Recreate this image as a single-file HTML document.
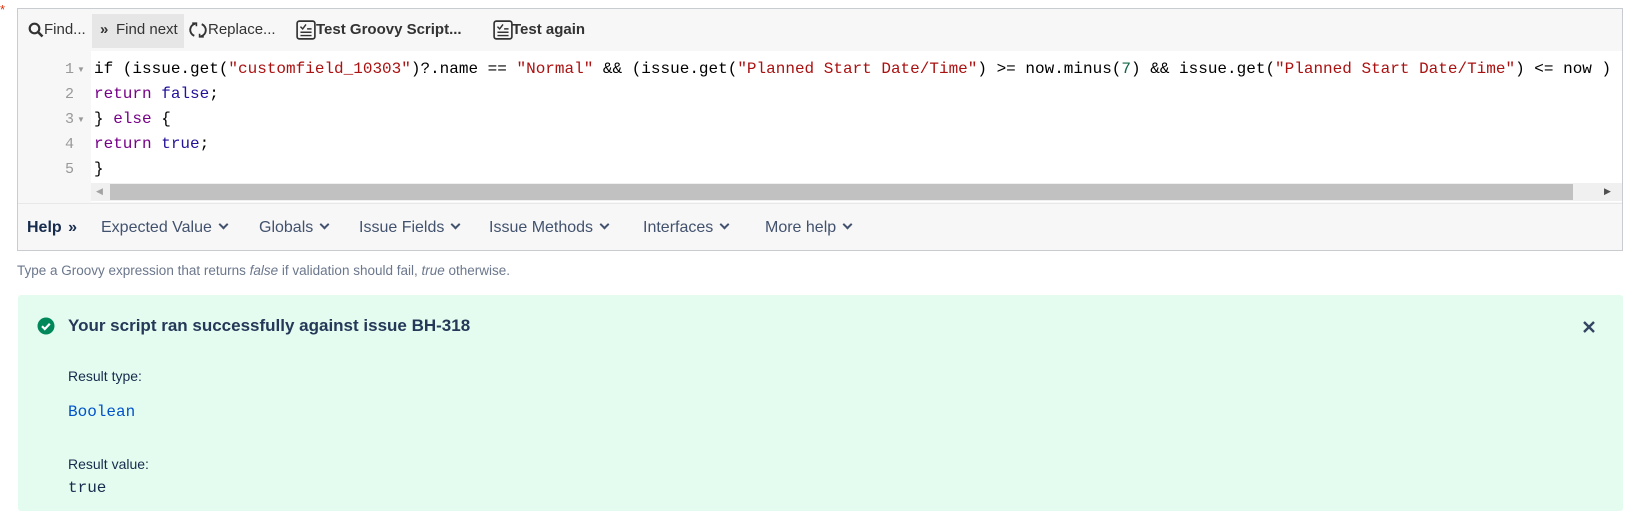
<!DOCTYPE html>
<html><head><meta charset="utf-8"><style>
*{margin:0;padding:0;box-sizing:border-box}
body{width:1627px;height:513px;background:#fff;font-family:"Liberation Sans",sans-serif;position:relative;overflow:hidden;color:#172b4d}
.abs{position:absolute;white-space:nowrap}
.box{position:absolute;left:17px;top:8px;width:1606px;height:243px;border:1px solid #c8cbd0;background:#f7f7f7}
.tb{font-size:15px;color:#333;top:21px}
.code{font-family:"Liberation Mono",monospace;font-size:16px;line-height:25px;color:#000}
.kw{color:#770088}.st{color:#aa1111}.nu{color:#116644}.at{color:#221199}
.ln{font-family:"Liberation Mono",monospace;font-size:15px;line-height:25px;color:#999;left:56px;width:18px;text-align:right}
.fold{left:77px;font-size:8px;color:#999;line-height:25px}
.help{font-size:16px;color:#42526e;top:219px}
.chev{display:inline-block;width:7px;height:7px;border-right:2px solid #42526e;border-bottom:2px solid #42526e;transform:rotate(45deg);margin-left:8px;position:relative;top:-4px}
</style></head><body>
<div class="abs" style="left:0;top:2px;color:#de350b;font-size:13px">*</div>
<div class="box"></div>
<!-- toolbar -->
<div class="abs" style="left:92px;top:14px;width:92px;height:34px;background:#e6e6e6"></div>
<svg class="abs" style="left:28px;top:22px" width="16" height="16" viewBox="0 0 16 16"><circle cx="6.5" cy="6.5" r="4.8" fill="none" stroke="#333" stroke-width="2.2"/><path d="M10 10l4.5 4.5" stroke="#333" stroke-width="2.6"/></svg>
<div class="abs tb" style="left:44px">Find...</div>
<div class="abs tb" style="left:100px;font-weight:bold">»</div>
<div class="abs tb" style="left:116px">Find next</div>
<svg class="abs" style="left:189px;top:21px" width="18" height="18" viewBox="0 0 17 17"><path d="M6 2.5A6 6 0 0 0 5 14" fill="none" stroke="#333" stroke-width="1.8"/><path d="M11 14.5A6 6 0 0 0 12 3" fill="none" stroke="#333" stroke-width="1.8"/><path d="M3 2h4v3" fill="none" stroke="#333" stroke-width="1.5"/><path d="M14 15h-4v-3" fill="none" stroke="#333" stroke-width="1.5"/></svg>
<div class="abs tb" style="left:208px">Replace...</div>
<svg class="abs" style="left:296px;top:20px" width="20" height="20" viewBox="0 0 18 18"><rect x="1" y="1" width="16" height="16" rx="2" fill="none" stroke="#333" stroke-width="1.5"/><path d="M4 6l2 2 3-4M4 11h10M4 14h10M10 8h4" fill="none" stroke="#333" stroke-width="1.3"/></svg>
<div class="abs tb" style="left:316px;font-weight:bold">Test Groovy Script...</div>
<svg class="abs" style="left:493px;top:20px" width="20" height="20" viewBox="0 0 18 18"><rect x="1" y="1" width="16" height="16" rx="2" fill="none" stroke="#333" stroke-width="1.5"/><path d="M4 6l2 2 3-4M4 11h10M4 14h10M10 8h4" fill="none" stroke="#333" stroke-width="1.3"/></svg>
<div class="abs tb" style="left:512px;font-weight:bold">Test again</div>
<!-- code area -->
<div class="abs" style="left:91px;top:51px;width:1531px;height:151px;background:#fff;overflow:hidden">
<div class="abs code" style="left:3px;top:6px">if (issue.get(<span class="st">"customfield_10303"</span>)?.name == <span class="st">"Normal"</span> &amp;&amp; (issue.get(<span class="st">"Planned Start Date/Time"</span>) &gt;= now.minus(<span class="nu">7</span>) &amp;&amp; issue.get(<span class="st">"Planned Start Date/Time"</span>) &lt;= now  )</div>
<div class="abs code" style="left:3px;top:31px"><span class="kw">return</span> <span class="at">false</span>;</div>
<div class="abs code" style="left:3px;top:56px">} <span class="kw">else</span> {</div>
<div class="abs code" style="left:3px;top:81px"><span class="kw">return</span> <span class="at">true</span>;</div>
<div class="abs code" style="left:3px;top:106px">}</div>
</div>
<div class="abs" style="left:18px;top:51px;width:73px;height:151px;background:#f7f7f7"></div>
<div class="abs ln" style="top:57px">1</div><div class="abs fold" style="top:57px">▼</div>
<div class="abs ln" style="top:82px">2</div>
<div class="abs ln" style="top:107px">3</div><div class="abs fold" style="top:107px">▼</div>
<div class="abs ln" style="top:132px">4</div>
<div class="abs ln" style="top:157px">5</div>
<!-- scrollbar -->
<div class="abs" style="left:91px;top:183px;width:1531px;height:18px;background:#f0f0f0"></div>
<div class="abs" style="left:110px;top:184px;width:1463px;height:16px;background:#c1c1c1"></div>
<div class="abs" style="left:96px;top:186px;font-size:9px;color:#a3a3a3">◀</div>
<div class="abs" style="left:1604px;top:186px;font-size:9px;color:#505050">▶</div>
<!-- help bar -->
<div class="abs" style="left:18px;top:203px;width:1604px;height:1px;background:#e8e8e8"></div>
<div class="abs help" style="left:27px;color:#172b4d;font-weight:bold">Help <span style="margin-left:2px">»</span></div>
<div class="abs help" style="left:101px">Expected Value<span class="chev"></span></div>
<div class="abs help" style="left:259px">Globals<span class="chev"></span></div>
<div class="abs help" style="left:359px">Issue Fields<span class="chev"></span></div>
<div class="abs help" style="left:489px">Issue Methods<span class="chev"></span></div>
<div class="abs help" style="left:643px">Interfaces<span class="chev"></span></div>
<div class="abs help" style="left:765px">More help<span class="chev"></span></div>
<div class="abs" style="left:17px;top:263px;font-size:13.5px;color:#6b778c">Type a Groovy expression that returns <i>false</i> if validation should fail, <i>true</i> otherwise.</div>
<!-- success panel -->
<div class="abs" style="left:18px;top:295px;width:1605px;height:216px;background:#e3fcef;border-radius:3px"></div>
<svg class="abs" style="left:37px;top:317px" width="18" height="18" viewBox="0 0 18 18"><circle cx="9" cy="9" r="8.5" fill="#00875a"/><path d="M5 9.2l2.8 2.8 5-5.2" fill="none" stroke="#fff" stroke-width="2.2"/></svg>
<div class="abs" style="left:68px;top:316px;font-size:17px;font-weight:bold;color:#253858">Your script ran successfully against issue BH-318</div>
<svg class="abs" style="left:1582px;top:320px" width="14" height="14" viewBox="0 0 14 14"><path d="M2 2l10 10M12 2L2 12" stroke="#344563" stroke-width="2.4"/></svg>
<div class="abs" style="left:68px;top:368px;font-size:14px;color:#172b4d">Result type:</div>
<div class="abs" style="left:68px;top:403px;font-family:'Liberation Mono',monospace;font-size:16px;color:#0052cc">Boolean</div>
<div class="abs" style="left:68px;top:456px;font-size:14px;color:#172b4d">Result value:</div>
<div class="abs" style="left:68px;top:479px;font-family:'Liberation Mono',monospace;font-size:16px;color:#172b4d">true</div>
</body></html>
